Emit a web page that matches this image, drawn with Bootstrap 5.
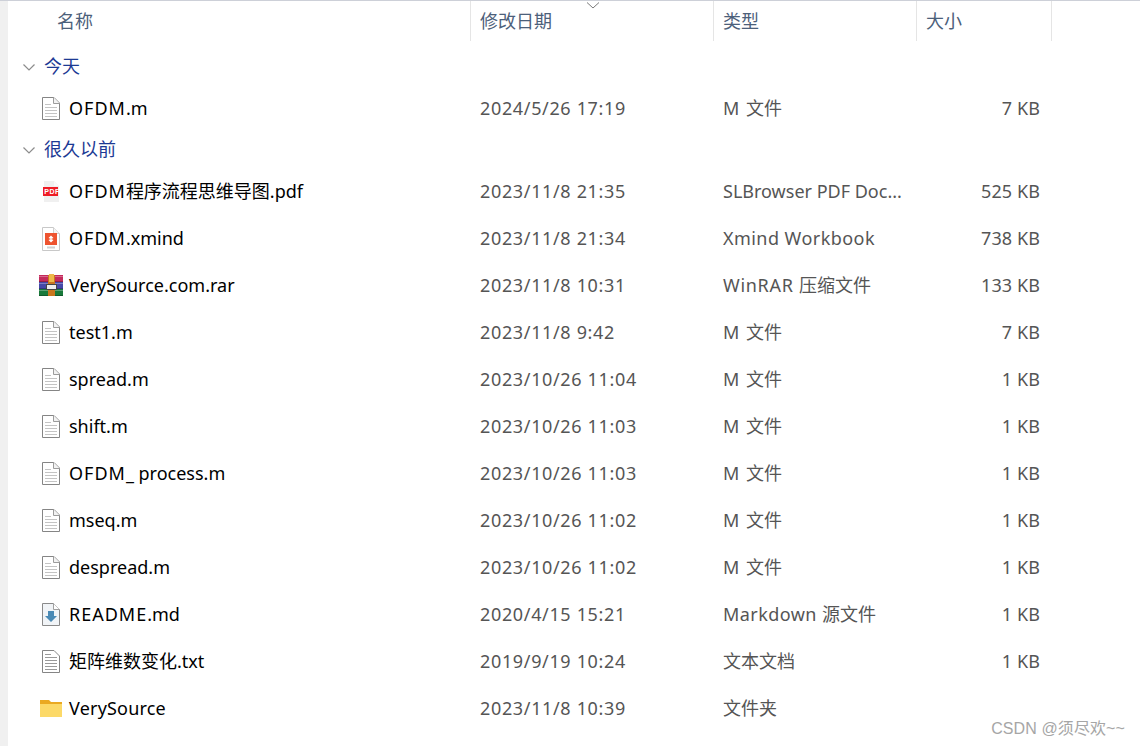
<!DOCTYPE html>
<html lang="zh">
<head>
<meta charset="utf-8">
<title>文件列表</title>
<link href="https://cdn.jsdelivr.net/npm/bootstrap@5.3.0/dist/css/bootstrap.min.css" rel="stylesheet">
<style>
html,body{height:100%;overflow:hidden;background:#fff}
body{font-family:"Noto Sans","Noto Sans CJK SC",sans-serif;font-size:18px;line-height:1.2;color:#000}
.fx-page{height:746px;border-top:1px solid #cdd0d8;position:relative}
.fx-strip{width:8px;background:#f0f0f0;flex:none}
.fx-main{flex:1;min-width:0}
.fx-head{height:40px;color:#4c607a;position:relative}
.fx-hcell{height:40px;border-right:1px solid #e5e5e5;padding-left:9px;padding-top:2px;display:flex;align-items:center;flex:none}
.fx-c1{width:463px;padding-left:49px}
.fx-c2{width:243px}
.fx-c3{width:203px}
.fx-c4{width:135px}
.fx-sort{position:absolute;left:578px;top:1px}
.fx-group{height:36px;color:#1c3a94;padding-left:14px}
.fx-g1{margin-top:8px}
.fx-chev{width:14px;margin-right:8px;flex:none}
.fx-row{height:47px;color:#555}
.fx-name{width:463px;padding-left:31px;color:#000;flex:none;white-space:nowrap}
.fx-ico{width:24px;height:24px;margin-right:6px;flex:none}
.fx-date{width:243px;padding-left:9px;flex:none;letter-spacing:.65px}
.fx-type{width:203px;padding-left:9px;flex:none;white-space:nowrap}
.fx-size{width:123px;text-align:right;flex:none;letter-spacing:.1px}
.fx-caps{letter-spacing:1px}
.fx-lat{letter-spacing:.45px}
.fx-m{letter-spacing:1px}
.fx-w{letter-spacing:.7px}
.fx-v{letter-spacing:.2px}
.fx-pdf{font:700 7px "Liberation Sans",sans-serif;fill:#fff;letter-spacing:.6px}
.fx-mark{position:absolute;right:15px;bottom:8px;font-size:16px;letter-spacing:.1px;color:#a6a6a6;font-family:"Liberation Sans","Noto Sans CJK SC",sans-serif}
</style>
</head>
<body>
<svg width="0" height="0" class="d-block position-absolute">
<defs>
<symbol id="i-doc" viewBox="0 0 24 24">
<path d="M3.5 .5H15L20.5 6V22.5H3.5Z" fill="#fff" stroke="#858585"/>
<path d="M14.5 .5V6.5H20.5" fill="#f2f2f2" stroke="#9c9c9c"/>
<path d="M6 7.5H12M6 10.5H18M6 13.5H18M6 16.5H18M6 19.5H18" stroke="#c4c4c4"/>
</symbol>
<symbol id="i-chev" viewBox="0 0 14 14"><path d="M1.5 4.5L7 10L12.5 4.5" fill="none" stroke="#8c8c8c" stroke-width="1.2"/></symbol>
</defs>
</svg>
<div class="fx-page d-flex">
<div class="fx-strip"></div>
<div class="fx-main">
<div class="fx-head d-flex">
<div class="fx-hcell fx-c1">名称</div>
<div class="fx-hcell fx-c2">修改日期</div>
<div class="fx-hcell fx-c3">类型</div>
<div class="fx-hcell fx-c4">大小</div>
<svg class="fx-sort" width="14" height="7" viewBox="0 0 14 7"><path d="M1 0.5L7 6L13 0.5" fill="none" stroke="#7a7a7a"/></svg>
</div>
<div class="fx-group fx-g1 d-flex align-items-center"><svg class="fx-chev" height="14"><use href="#i-chev"/></svg>今天</div>
<div class="fx-row d-flex align-items-center">
<div class="fx-name d-flex align-items-center"><svg class="fx-ico"><use href="#i-doc"/></svg><span><span class="fx-caps">OFDM</span>.m</span></div>
<div class="fx-date">2024/5/26 17:19</div><div class="fx-type"><span class="fx-m">M </span>文件</div><div class="fx-size">7 KB</div></div>
<div class="fx-group d-flex align-items-center"><svg class="fx-chev" height="14"><use href="#i-chev"/></svg>很久以前</div>
<div class="fx-row d-flex align-items-center">
<div class="fx-name d-flex align-items-center"><svg class="fx-ico" viewBox="0 0 24 24"><path d="M5 1H15L20 6V22H5Z" fill="#f0f0f0"/><path d="M15 1V6H20Z" fill="#fafafa"/><rect x="4" y="7" width="15" height="9" fill="#ef1c25"/><text class="fx-pdf" x="5.2" y="14">PDF</text></svg><span><span class="fx-caps">OFDM</span>程序流程思维导图.pdf</span></div>
<div class="fx-date">2023/11/8 21:35</div><div class="fx-type">SLBrowser PDF Doc...</div><div class="fx-size">525 KB</div></div>
<div class="fx-row d-flex align-items-center">
<div class="fx-name d-flex align-items-center"><svg class="fx-ico" viewBox="0 0 24 24"><path d="M3.5 .5H14.5L20.5 6.5V23.5H3.5Z" fill="#fff" stroke="#c8c8c8"/><path d="M14.5 .5V6.5H20.5" fill="#f4f4f4" stroke="#d0d0d0"/><rect x="6" y="6" width="12" height="12" fill="#ee5430"/><path d="M12 8.5L14.5 11L12 12L9.5 11ZM12 15.5L14.5 13L12 12L9.5 13Z" fill="#fff"/><path d="M8 20.5H16" stroke="#d0d0d0" stroke-width="2"/></svg><span><span class="fx-caps">OFDM</span>.xmind</span></div>
<div class="fx-date">2023/11/8 21:34</div><div class="fx-type"><span class="fx-lat">Xmind Workbook</span></div><div class="fx-size">738 KB</div></div>
<div class="fx-row d-flex align-items-center">
<div class="fx-name d-flex align-items-center"><svg class="fx-ico" viewBox="0 0 24 24"><rect x="0" y="1" width="24" height="7" fill="#c42a5c"/><rect x="0" y="8" width="24" height="7" fill="#4548a8"/><rect x="0" y="15" width="24" height="7" fill="#18793a"/><path d="M0 2.5H24M0 9.5H24M0 16.5H24" stroke="#fff" stroke-opacity=".3"/><path d="M0 7.5H24M0 14.5H24M0 21.5H24" stroke="#000" stroke-opacity=".25"/><rect x="9" y="1" width="7" height="21" fill="#c9761e"/><rect x="10" y="0" width="5" height="8" fill="#eeb84a"/><rect x="7.5" y="10.5" width="10" height="5" fill="#eee" stroke="#444"/></svg>VerySource.com.rar</div>
<div class="fx-date">2023/11/8 10:31</div><div class="fx-type"><span class="fx-w">WinRAR </span>压缩文件</div><div class="fx-size">133 KB</div></div>
<div class="fx-row d-flex align-items-center">
<div class="fx-name d-flex align-items-center"><svg class="fx-ico"><use href="#i-doc"/></svg>test1.m</div>
<div class="fx-date">2023/11/8 9:42</div><div class="fx-type"><span class="fx-m">M </span>文件</div><div class="fx-size">7 KB</div></div>
<div class="fx-row d-flex align-items-center">
<div class="fx-name d-flex align-items-center"><svg class="fx-ico"><use href="#i-doc"/></svg>spread.m</div>
<div class="fx-date">2023/10/26 11:04</div><div class="fx-type"><span class="fx-m">M </span>文件</div><div class="fx-size">1 KB</div></div>
<div class="fx-row d-flex align-items-center">
<div class="fx-name d-flex align-items-center"><svg class="fx-ico"><use href="#i-doc"/></svg>shift.m</div>
<div class="fx-date">2023/10/26 11:03</div><div class="fx-type"><span class="fx-m">M </span>文件</div><div class="fx-size">1 KB</div></div>
<div class="fx-row d-flex align-items-center">
<div class="fx-name d-flex align-items-center"><svg class="fx-ico"><use href="#i-doc"/></svg><span><span class="fx-caps">OFDM</span>_ process.m</span></div>
<div class="fx-date">2023/10/26 11:03</div><div class="fx-type"><span class="fx-m">M </span>文件</div><div class="fx-size">1 KB</div></div>
<div class="fx-row d-flex align-items-center">
<div class="fx-name d-flex align-items-center"><svg class="fx-ico"><use href="#i-doc"/></svg>mseq.m</div>
<div class="fx-date">2023/10/26 11:02</div><div class="fx-type"><span class="fx-m">M </span>文件</div><div class="fx-size">1 KB</div></div>
<div class="fx-row d-flex align-items-center">
<div class="fx-name d-flex align-items-center"><svg class="fx-ico"><use href="#i-doc"/></svg>despread.m</div>
<div class="fx-date">2023/10/26 11:02</div><div class="fx-type"><span class="fx-m">M </span>文件</div><div class="fx-size">1 KB</div></div>
<div class="fx-row d-flex align-items-center">
<div class="fx-name d-flex align-items-center"><svg class="fx-ico" viewBox="0 0 24 24"><path d="M3.5 .5H14.5L20.5 6.5V22.5H3.5Z" fill="#f1f4f7" stroke="#8a8a8a"/><path d="M14.5 .5V6.5H20.5" fill="#fff" stroke="#a0a0a0"/><path d="M9 8H15V13H18L12 19L6 13H9Z" fill="#4a8ab5"/></svg><span class="fx-caps">README</span>.md</div>
<div class="fx-date">2020/4/15 15:21</div><div class="fx-type"><span class="fx-lat">Markdown </span>源文件</div><div class="fx-size">1 KB</div></div>
<div class="fx-row d-flex align-items-center">
<div class="fx-name d-flex align-items-center"><svg class="fx-ico" viewBox="0 0 24 24"><path d="M3.5 .5H15L20.5 6V22.5H3.5Z" fill="#fff" stroke="#858585"/><path d="M6 4.5H12M6 7.5H18M6 10.5H18M6 13.5H18M6 16.5H18M6 19.5H18" stroke="#999"/></svg>矩阵维数变化.txt</div>
<div class="fx-date">2019/9/19 10:24</div><div class="fx-type">文本文档</div><div class="fx-size">1 KB</div></div>
<div class="fx-row d-flex align-items-center">
<div class="fx-name d-flex align-items-center"><svg class="fx-ico" viewBox="0 0 24 24"><path d="M1 3H10L12 5H23V20H1Z" fill="#eaa922"/><path d="M1 7H23V20H1Z" fill="#fcd968"/></svg><span class="fx-v">VerySource</span></div>
<div class="fx-date">2023/11/8 10:39</div><div class="fx-type">文件夹</div><div class="fx-size"></div></div>
</div>
<div class="fx-mark">CSDN @须尽欢~~</div>
</div>
<script src="https://cdn.jsdelivr.net/npm/bootstrap@5.3.0/dist/js/bootstrap.bundle.min.js"></script>
</body>
</html>
